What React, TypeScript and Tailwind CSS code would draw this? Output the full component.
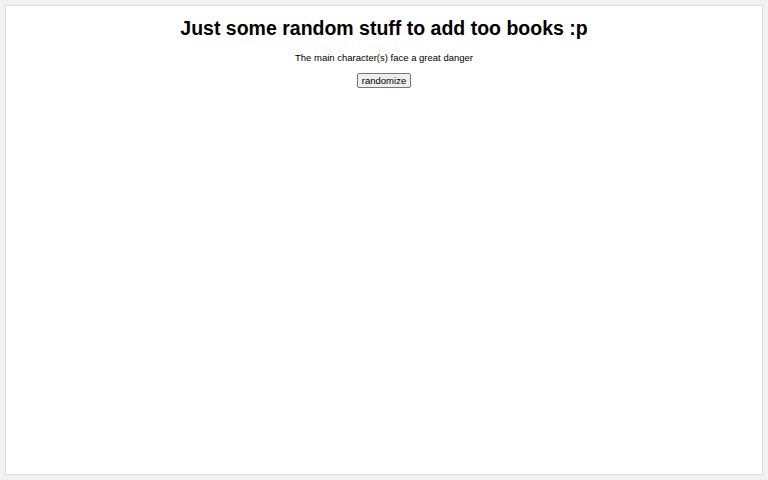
import React, { useState } from 'react';

const prompts = [
    'The main character(s) face a great danger',
    'A stranger arrives with a secret',
    'An old friend returns with bad news',
    'The map leads somewhere unexpected',
];

const App: React.FC = () => {
    const [idx, setIdx] = useState(0);

    return (
        <div className="h-[480px] bg-[#f2f2f2] p-[5px] font-['Liberation_Sans',Arial,sans-serif]">
            <div className="h-full bg-white border border-[#dcdcdc] flex flex-col items-center">
                {/* Header */}
                <h1 className="mt-[10px] text-[19.5px] leading-[24px] font-bold text-black">Just some random stuff to add too books :p</h1>
                <p className="mt-[12px] text-[9.5px] leading-[12px] text-black">{prompts[idx]}</p>
                <button
                    onClick={() => setIdx((idx + 1) % prompts.length)}
                    className="mt-[9px] h-[15px] px-[4px] text-[9.5px] leading-[12px] text-black bg-[#efefef] border border-[#767676] rounded-[2px]"
                >
                    randomize
                </button>
            </div>
        </div>
    );
};

export default App;
